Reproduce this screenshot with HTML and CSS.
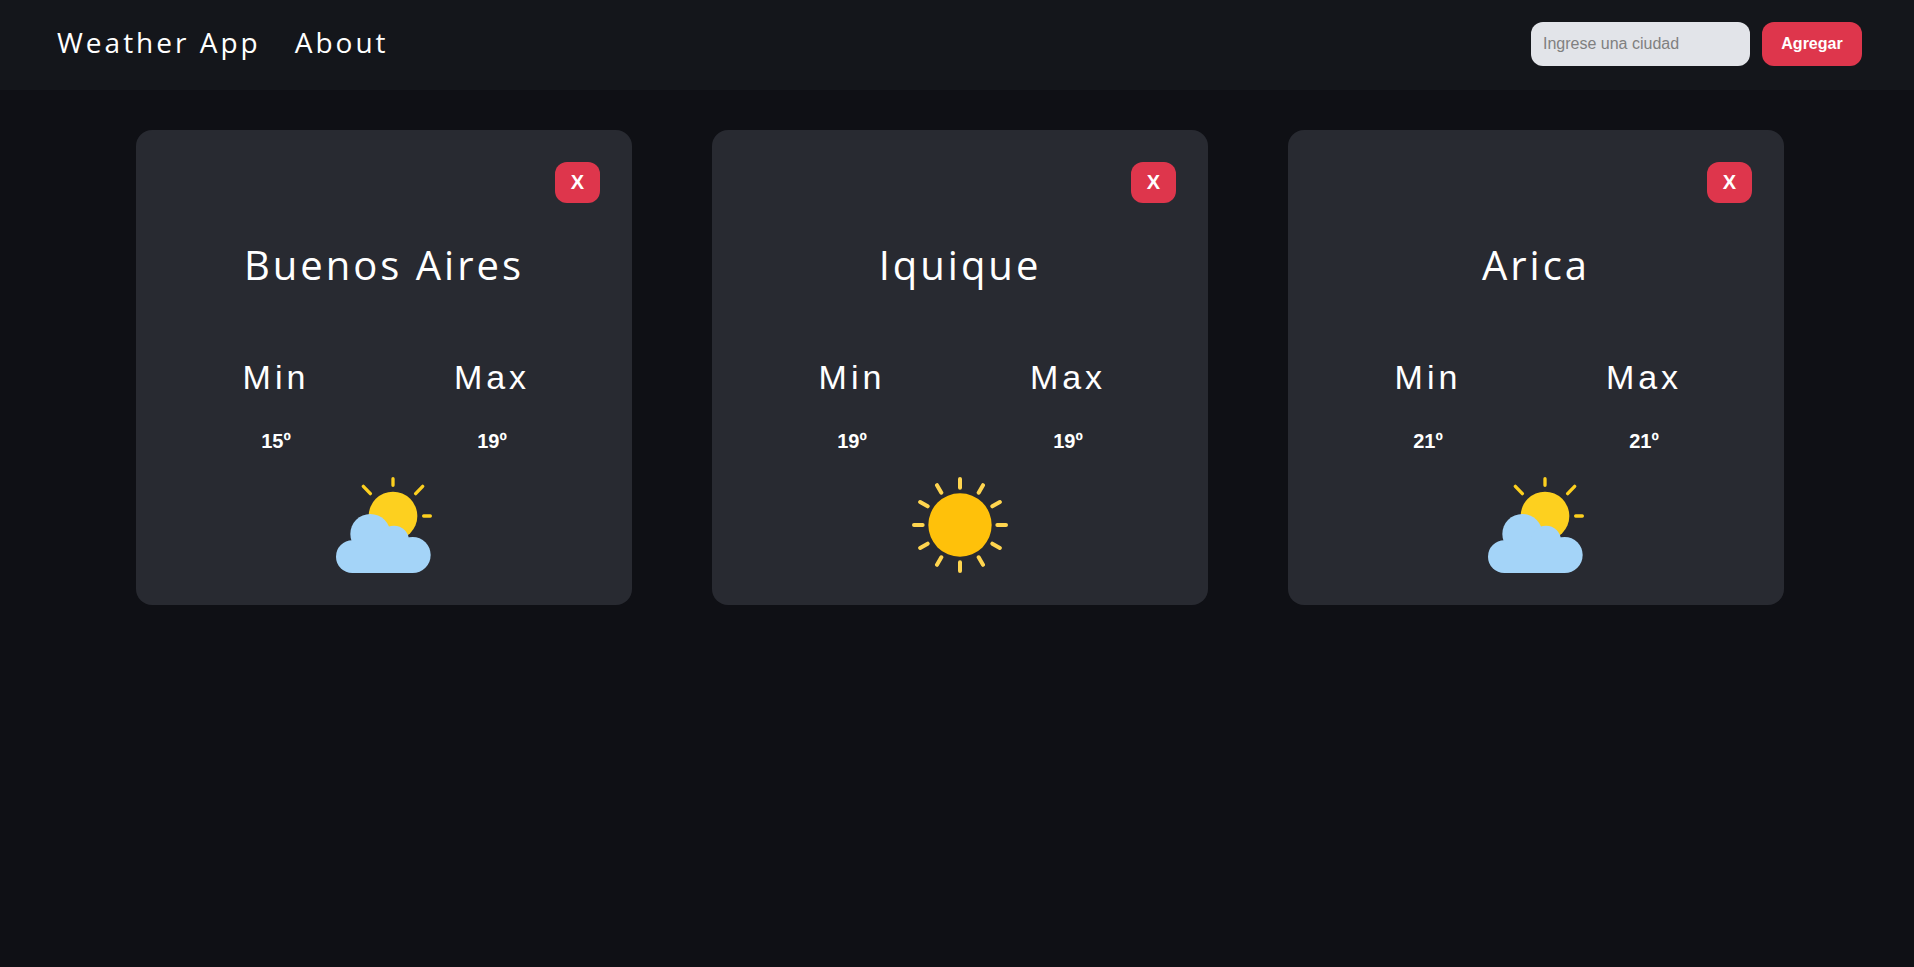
FILE: index.html
```html
<!DOCTYPE html>
<html lang="es">

<head>
<meta charset="utf-8">
<meta name="viewport" content="width=device-width, initial-scale=1">
<title>Weather App</title>
<link rel="stylesheet" href="styles.css">
</head>

<body>

<!-- weather icons, reused by the cards -->
<svg class="sprite" aria-hidden="true">
	<symbol id="partly-cloudy" viewBox="0 0 288 288">
		<g stroke="#fdd01f" stroke-width="10" stroke-linecap="round">
			<path d="M171 5V25M82 28L103 50M260 28L239 50M263 117H283"/>
		</g>
		<circle cx="171" cy="117" r="73" fill="#fdd01f"/>
		<g fill="#a4d4f8">
			<circle cx="49" cy="239" r="49"/>
			<circle cx="103" cy="171" r="60"/>
			<circle cx="174" cy="191" r="45"/>
			<circle cx="230" cy="234" r="54"/>
			<path d="M60 195H222V240H230V288H49V240H60z"/>
		</g>
	</symbol>
	<symbol id="clear" viewBox="0 0 288 288">
		<g stroke="#ffd54f" stroke-width="12" stroke-linecap="round">
			<path id="rays" d="M144 6V32M144 256V282M6 144H32M256 144H282"/>
			<use href="#rays" transform="rotate(30 144 144)"/>
			<use href="#rays" transform="rotate(60 144 144)"/>
		</g>
		<circle cx="144" cy="144" r="95" fill="#ffc10a"/>
	</symbol>
</svg>

<header class="navbar">
	<nav class="links">
		<a href="#">Weather App</a>
		<a href="#">About</a>
	</nav>
	<form class="search">
		<input type="text" placeholder="Ingrese una ciudad" aria-label="Ciudad">
		<button type="submit">Agregar</button>
	</form>
</header>

<main class="cards">
	<article class="card">
		<button class="close" type="button">X</button>
		<h2 class="city">Buenos Aires</h2>
		<div class="temps">
			<div>
				<h3>Min</h3>
				<p>15º</p>
			</div>
			<div>
				<h3>Max</h3>
				<p>19º</p>
			</div>
		</div>
		<svg class="icon" aria-hidden="true"><use href="#partly-cloudy"/></svg>
	</article>
	<article class="card">
		<button class="close" type="button">X</button>
		<h2 class="city">Iquique</h2>
		<div class="temps">
			<div>
				<h3>Min</h3>
				<p>19º</p>
			</div>
			<div>
				<h3>Max</h3>
				<p>19º</p>
			</div>
		</div>
		<svg class="icon" aria-hidden="true"><use href="#clear"/></svg>
	</article>
	<article class="card">
		<button class="close" type="button">X</button>
		<h2 class="city">Arica</h2>
		<div class="temps">
			<div>
				<h3>Min</h3>
				<p>21º</p>
			</div>
			<div>
				<h3>Max</h3>
				<p>21º</p>
			</div>
		</div>
		<svg class="icon" aria-hidden="true"><use href="#partly-cloudy"/></svg>
	</article>
</main>

</body>

</html>
```
FILE: styles.css
```css
* {
	box-sizing: border-box;
}

body {
	margin: 0;
	background-color: #0f1015;
	color: #ffffff;
	font-family: "Liberation Sans", Arial, sans-serif;
}

.sprite {
	display: none;
}

.navbar {
	display: flex;
	justify-content: space-between;
	align-items: flex-start;
	padding: 22px 52px 24px 57px;
	background-color: #14161b;
}

.links {
	display: flex;
	gap: 34px;
}

.links a {
	color: #ffffff;
	font-family: "Segoe UI", "Open Sans", sans-serif;
	font-size: 28px;
	line-height: 40px;
	letter-spacing: 3px;
	text-decoration: none;
}

.search {
	display: flex;
	gap: 12px;
}

.search input {
	width: 219px;
	height: 44px;
	padding: 0 12px;
	border: none;
	border-radius: 12px;
	background-color: #e2e4e9;
	font-family: inherit;
	font-size: 16px;
}

.search input::placeholder {
	color: #808080;
}

button {
	border: none;
	border-radius: 12px;
	background-color: #de364c;
	color: #ffffff;
	font-family: inherit;
	font-weight: bold;
	cursor: pointer;
}

.search button {
	width: 100px;
	font-size: 16px;
}

.cards {
	display: grid;
	grid-template-columns: repeat(3, 1fr);
	gap: 80px;
	padding: 40px 130px 40px 136px;
}

.card {
	display: flex;
	flex-direction: column;
	padding: 32px;
	border-radius: 16px;
	background-color: #282a31;
	text-align: center;
}

.close {
	align-self: flex-end;
	width: 45px;
	height: 41px;
	padding: 0;
	font-size: 20px;
}

.city {
	margin: 32px 0;
	font-family: "Segoe UI", "Open Sans", sans-serif;
	font-size: 40px;
	font-weight: normal;
	line-height: 60px;
	letter-spacing: 3px;
}

.temps {
	display: grid;
	grid-template-columns: 1fr 1fr;
	margin: 30px 0 24px;
}

.temps h3 {
	margin: 0;
	font-size: 34px;
	font-weight: normal;
	line-height: 40px;
	letter-spacing: 4px;
}

.temps p {
	margin: 32px 0 0;
	font-size: 20px;
	font-weight: bold;
	line-height: 24px;
}

.icon {
	align-self: center;
	width: 96px;
	height: 96px;
}
```
